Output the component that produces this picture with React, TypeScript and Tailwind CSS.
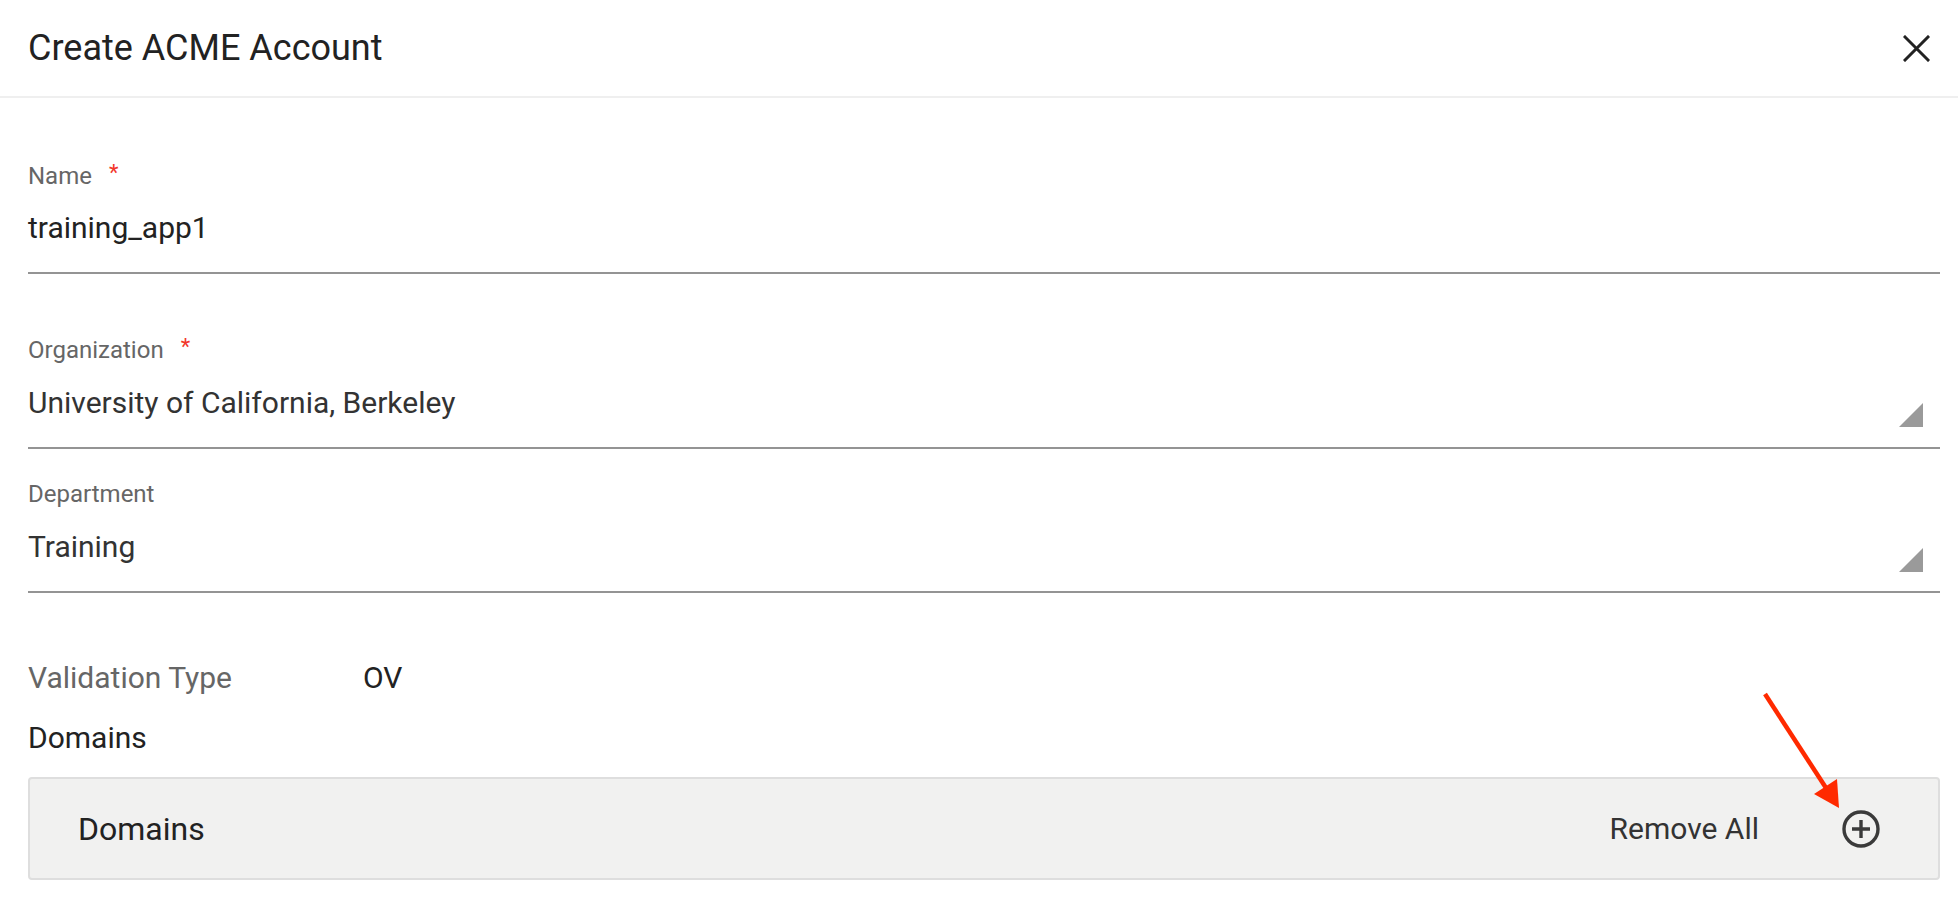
import React from "react";

function Triangle() {
  return (
    <svg width="24" height="24" viewBox="0 0 24 24" className="shrink-0 mr-[17px]">
      <polygon points="24,0 24,24 0,24" fill="#9a9a9a" />
    </svg>
  );
}

function Label({ text, required }: { text: string; required?: boolean }) {
  return (
    <div className="flex items-start text-[24px] leading-[28px] text-[#666]">
      <span>{text}</span>
      {required && <span className="ml-[17px] text-[#f2362a] text-[22px] leading-[22px]">*</span>}
    </div>
  );
}

export default function App() {
  return (
    <div className="relative w-full h-[914px] bg-white overflow-hidden font-['Roboto',sans-serif]">
      <header className="h-[98px] flex items-center justify-between pl-[28px] pr-[28px] border-b-2 border-[#efefef]">
        <h1 className="text-[36px] leading-[44px] text-[#222] font-normal">Create ACME Account</h1>
        <button className="w-[27px] h-[27px] flex items-center justify-center">
          <svg width="27" height="27" viewBox="0 0 27 27">
            <path d="M2 2 L25 25 M25 2 L2 25" stroke="#222" strokeWidth="3" strokeLinecap="square" />
          </svg>
        </button>
      </header>

      <div className="pl-[28px] pr-[18px]">
        {/* Name */}
        <div className="mt-[64px] border-b-2 border-[#949494] pb-[26px]">
          <Label text="Name" required />
          <div className="mt-[20px] text-[30px] leading-[36px] text-[#222]">training_app1</div>
        </div>

        {/* Organization */}
        <div className="mt-[62px] border-b-2 border-[#949494] pb-[20px]">
          <Label text="Organization" required />
          <div className="mt-[21px] flex items-end justify-between">
            <div className="mb-[6px] text-[30px] leading-[36px] text-[#333]">University of California, Berkeley</div>
            <Triangle />
          </div>
        </div>

        {/* Department */}
        <div className="mt-[31px] border-b-2 border-[#949494] pb-[19px]">
          <Label text="Department" />
          <div className="mt-[21px] flex items-end justify-between">
            <div className="mb-[7px] text-[30px] leading-[36px] text-[#333]">Training</div>
            <Triangle />
          </div>
        </div>

        {/* Validation type */}
        <div className="mt-[67px] flex items-center text-[30px] leading-[36px]">
          <span className="w-[335px] text-[#666]">Validation Type</span>
          <span className="text-[#222]">OV</span>
        </div>

        <div className="mt-[24px] text-[30px] leading-[36px] text-[#222]">Domains</div>

        {/* Domains box */}
        <div className="mt-[21px] h-[103px] border-2 border-[#dedede] bg-[#f1f1f0] rounded-[4px] flex items-center pl-[48px] pr-[58px]">
          <span className="text-[32px] leading-[38px] text-[#222]">Domains</span>
          <span className="ml-auto text-[30px] leading-[36px] text-[#333]">Remove All</span>
          <button className="ml-[83px] w-[38px] h-[38px]">
            <svg width="38" height="38" viewBox="0 0 38 38">
              <circle cx="19" cy="19" r="17" fill="none" stroke="#3a3a3a" strokeWidth="3.4" />
              <path d="M19 10 V28 M10 19 H28" stroke="#3a3a3a" strokeWidth="3.4" />
            </svg>
          </button>
        </div>
      </div>

      {/* annotation arrow */}
      <svg className="absolute left-0 top-0 pointer-events-none" width="1958" height="914">
        <line x1="1765" y1="694" x2="1828" y2="791" stroke="#ff2a00" strokeWidth="4.5" />
        <polygon points="1814,794 1837,779 1839,808" fill="#ff2a00" />
      </svg>
    </div>
  );
}
